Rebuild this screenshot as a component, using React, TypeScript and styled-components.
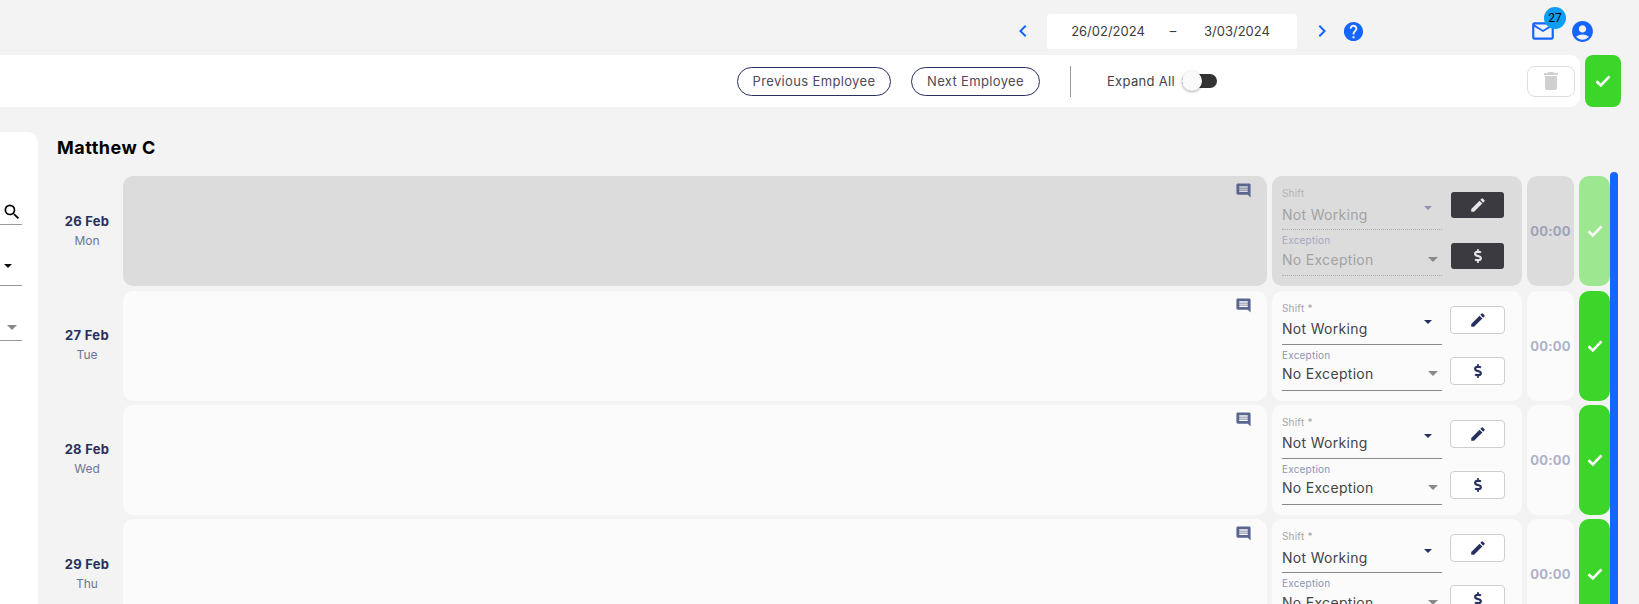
import React from 'react'
import styled, { createGlobalStyle } from 'styled-components'
import { FaDollarSign } from 'react-icons/fa'
import {
  MdAccountCircle,
  MdChevronLeft,
  MdChevronRight,
  MdComment,
  MdDelete,
  MdEdit,
  MdHelp,
  MdMailOutline,
  MdSearch,
} from 'react-icons/md'

const GlobalStyle = createGlobalStyle`
  html, body {
    margin: 0;
    padding: 0;
    background: #f3f3f3;
    font-family: Inter, "Open Sans", sans-serif;
  }
  * { box-sizing: border-box; }
`

const Page = styled.div`
  width: 1639px;
  height: 604px;
  overflow: hidden;
  display: flex;
  flex-direction: column;
  background: #f3f3f3;
`

const TopBar = styled.div`
  height: 55px;
  flex: none;
  display: flex;
  align-items: center;
  padding: 12px 0 5px 1011px;
`

const NavButton = styled.span`
  display: flex;
  width: 24px;
  color: #1565ff;
  font-size: 24px;
  margin: ${(p: { $margin: string }) => p.$margin};
`

const DateBox = styled.div`
  width: 250px;
  height: 35px;
  background: #fff;
  border-radius: 4px;
  display: grid;
  grid-template-columns: 122px 8px 1fr;
  align-items: center;
  font-size: 13px;
  color: #3c3c3c;
  text-align: center;
`

const IconSlot = styled.span`
  display: flex;
  color: #1565ff;
`

const Account = styled.div`
  position: relative;
  display: flex;
  align-items: center;
  margin-left: 165px;
  gap: 14px;
`

const Badge = styled.span`
  position: absolute;
  left: 14px;
  top: -11px;
  width: 22px;
  height: 22px;
  border-radius: 50%;
  background: #0d9df5;
  color: #000;
  font-family: Roboto, sans-serif;
  font-size: 12px;
  line-height: 22px;
  text-align: center;
`

const ToolbarRow = styled.div`
  height: 52px;
  flex: none;
  display: flex;
  gap: 5px;
`

const Toolbar = styled.div`
  width: 1580px;
  background: #fff;
  border-radius: 0 10px 10px 0;
  display: flex;
  align-items: center;
  padding: 0 5px 0 737px;
`

const OutlineButton = styled.button`
  width: ${(p: { $width: number }) => p.$width}px;
  height: 29px;
  margin-right: 20px;
  border: 1px solid #27305f;
  border-radius: 15px;
  background: #fff;
  color: #4b4b5c;
  font-family: inherit;
  font-size: 13px;
  letter-spacing: 0.35px;
  padding: 0;
`

const Divider = styled.div`
  width: 1px;
  height: 31px;
  margin: 0 36px 0 10px;
  background: #999;
`

const ExpandLabel = styled.span`
  width: 75px;
  font-size: 13px;
  letter-spacing: 0.3px;
  color: #444;
`

const Toggle = styled.div`
  position: relative;
  width: 35px;
  height: 14px;
  border-radius: 7px;
  background: #333;
`

const Knob = styled.span`
  position: absolute;
  left: 0;
  top: -3px;
  width: 20px;
  height: 20px;
  border-radius: 50%;
  background: #fafafa;
  box-shadow: 0 1px 3px rgba(0, 0, 0, 0.35);
`

const TrashButton = styled.div`
  margin-left: auto;
  width: 48px;
  height: 31px;
  border: 1px solid #dedede;
  border-radius: 8px;
  display: flex;
  align-items: center;
  justify-content: center;
  color: #d0d0d0;
  font-size: 24px;
`

const SaveButton = styled.div`
  width: 36px;
  border-radius: 8px;
  background: #3bd629;
  color: #fff;
  display: flex;
  align-items: center;
  justify-content: center;
`

const Body = styled.div`
  flex: 1;
  min-height: 0;
  display: flex;
`

const Sidebar = styled.aside`
  width: 38px;
  flex: none;
  margin-top: 25px;
  padding-top: 43px;
  background: #fff;
  border-radius: 0 10px 0 0;
`

const SidebarField = styled.div`
  width: 22px;
  height: ${(p: { $height: number }) => p.$height}px;
  border-bottom: 1px solid #999;
  display: flex;
  align-items: flex-end;
  justify-content: ${(p: { $height: number; $end?: boolean }) => (p.$end ? 'flex-end' : 'flex-start')};
  padding-bottom: 2px;
  color: #000;
  font-size: 20px;
`

const Caret = styled.span<{ $size: number; $color: string }>`
  flex: none;
  width: 0;
  height: 0;
  border-left: ${(p) => p.$size}px solid transparent;
  border-right: ${(p) => p.$size}px solid transparent;
  border-top: ${(p) => p.$size}px solid ${(p) => p.$color};
`

const SidebarCaret = styled(Caret)<{ $offset: number; $lift: number }>`
  margin-left: ${(p) => p.$offset}px;
  margin-bottom: ${(p) => p.$lift}px;
`

const Content = styled.main`
  flex: 1;
  min-width: 0;
`

const Title = styled.h2`
  margin: 0;
  height: 69.3px;
  padding: 30px 0 0 19px;
  font-size: 18px;
  line-height: 22px;
  font-weight: 700;
  letter-spacing: 0.5px;
  color: #000;
`

const ScrollArea = styled.div`
  display: flex;
  align-items: flex-start;
`

const Rows = styled.div`
  width: 1572px;
  display: grid;
  grid-auto-rows: 110px;
  row-gap: 4.3px;
`

const Scrollbar = styled.div`
  width: 8px;
  height: 440px;
  margin-top: -4px;
  background: #1565ff;
  border-radius: 4px 4px 0 0;
`

const Row = styled.div`
  display: grid;
  grid-template-columns: 80px 1144px 250px 47px 31px;
  column-gap: 5px;
`

const DateCell = styled.div`
  display: flex;
  flex-direction: column;
  align-items: center;
  justify-content: center;
  gap: 6px;
  padding-left: 18px;
  padding-bottom: 1px;
`

const DayNumber = styled.span`
  font-size: 13px;
  line-height: 14px;
  font-weight: 700;
  letter-spacing: 0.3px;
  color: #27305f;
`

const DayName = styled.span`
  font-size: 12px;
  line-height: 14px;
  color: #6d7598;
`

const Card = styled.div<{ $disabled: boolean }>`
  border-radius: 10px;
  background: ${(p) => (p.$disabled ? '#dcdcdc' : '#fbfbfb')};
`

const NoteCard = styled(Card)`
  display: flex;
  justify-content: flex-end;
  padding: 6px 15px 0 0;
  color: #5a6690;
  font-size: 17px;
`

const ShiftCard = styled(Card)`
  display: flex;
  gap: 8px;
  padding: 10px 0 0 10px;
`

const Fields = styled.div`
  width: 160px;
  display: flex;
  flex-direction: column;
  gap: 3px;
`

const Field = styled.div<{ $height: number; $disabled: boolean }>`
  height: ${(p) => p.$height}px;
  display: flex;
  flex-direction: column;
  border-bottom: 1px ${(p) => (p.$disabled ? 'dotted #aaa' : 'solid #8a8a8a')};
`

const FieldLabel = styled.span<{ $accent: boolean; $disabled: boolean }>`
  height: 14px;
  font-size: 10px;
  line-height: 14px;
  letter-spacing: 0.2px;
  color: ${(p) => (p.$accent ? '#8d94b5' : '#a5a5a5')};
  opacity: ${(p) => (p.$disabled ? 0.7 : 1)};
`

const FieldValue = styled.div<{ $disabled: boolean }>`
  flex: 1;
  display: flex;
  align-items: center;
  justify-content: space-between;
  padding-bottom: 4px;
  font-size: 14px;
  letter-spacing: 0.3px;
  color: ${(p) => (p.$disabled ? '#a2a2a2' : '#444')};
`

const ShiftValue = styled(FieldValue)`
  padding-bottom: 1px;
`

const ShiftCaret = styled(Caret)`
  margin: 0 10px 13px 0;
`

const ExceptionCaret = styled(Caret)`
  margin-right: 4px;
`

const Actions = styled.div`
  display: flex;
  flex-direction: column;
  gap: 23px;
  padding-top: 5px;
`

const ActionButton = styled.div<{ $disabled: boolean }>`
  width: 55px;
  height: 28px;
  border-radius: 4px;
  border: 1px solid ${(p) => (p.$disabled ? 'transparent' : '#cfcfcf')};
  background: ${(p) => (p.$disabled ? '#3a3a40' : '#fff')};
  background-clip: padding-box;
  color: ${(p) => (p.$disabled ? '#e6e6e6' : '#27305f')};
  display: flex;
  align-items: center;
  justify-content: center;
  font-size: 18px;
`

const MoneyIcon = styled(FaDollarSign)`
  width: 14px;
  height: 14px;
`

const TimeCard = styled(Card)`
  display: flex;
  align-items: center;
  justify-content: center;
  font-size: 13px;
  font-weight: 700;
  letter-spacing: 0.2px;
  color: ${(p) => (p.$disabled ? '#9ea2b8' : '#adb1c9')};
`

const CheckCard = styled.div<{ $disabled: boolean }>`
  border-radius: 10px;
  background: ${(p) => (p.$disabled ? '#9ce78f' : '#3bd629')};
  color: #fff;
  display: flex;
  align-items: center;
  justify-content: center;
`

const CheckMark = () => (
  <svg width="16" height="14" viewBox="0 0 16 14" fill="none">
    <path d="M1.5 7.2 L5.8 11.4 L14.5 2.4" stroke="currentColor" strokeWidth="2.6" />
  </svg>
)

const days = [
  { date: '26 Feb', day: 'Mon', disabled: true },
  { date: '27 Feb', day: 'Tue', disabled: false },
  { date: '28 Feb', day: 'Wed', disabled: false },
  { date: '29 Feb', day: 'Thu', disabled: false },
]

export default function App() {
  return (
    <Page>
      <GlobalStyle />
      <TopBar>
        <NavButton $margin="0 12px 0 0">
          <MdChevronLeft />
        </NavButton>
        <DateBox>
          <span>26/02/2024</span>
          <span>–</span>
          <span>3/03/2024</span>
        </DateBox>
        <NavButton $margin="0 8px 0 13px">
          <MdChevronRight />
        </NavButton>
        <IconSlot>
          <MdHelp size={23} />
        </IconSlot>
        <Account>
          <IconSlot>
            <MdMailOutline size={26} />
          </IconSlot>
          <Badge>27</Badge>
          <IconSlot>
            <MdAccountCircle size={25} />
          </IconSlot>
        </Account>
      </TopBar>
      <ToolbarRow>
        <Toolbar>
          <OutlineButton $width={154}>Previous Employee</OutlineButton>
          <OutlineButton $width={129}>Next Employee</OutlineButton>
          <Divider />
          <ExpandLabel>Expand All</ExpandLabel>
          <Toggle>
            <Knob />
          </Toggle>
          <TrashButton>
            <MdDelete />
          </TrashButton>
        </Toolbar>
        <SaveButton>
          <CheckMark />
        </SaveButton>
      </ToolbarRow>
      <Body>
        <Sidebar>
          <SidebarField $height={50} $end>
            <MdSearch />
          </SidebarField>
          <SidebarField $height={61}>
            <SidebarCaret $size={4} $color="#111" $offset={4} $lift={15} />
          </SidebarField>
          <SidebarField $height={55}>
            <SidebarCaret $size={5} $color="#888" $offset={7} $lift={8} />
          </SidebarField>
        </Sidebar>
        <Content>
          <Title>Matthew C</Title>
          <ScrollArea>
            <Rows>
              {days.map((d) => (
                <Row key={d.date}>
                  <DateCell>
                    <DayNumber>{d.date}</DayNumber>
                    <DayName>{d.day}</DayName>
                  </DateCell>
                  <NoteCard $disabled={d.disabled}>
                    <MdComment />
                  </NoteCard>
                  <ShiftCard $disabled={d.disabled}>
                    <Fields>
                      <Field $height={44} $disabled={d.disabled}>
                        <FieldLabel $accent={false} $disabled={d.disabled}>
                          {d.disabled ? 'Shift' : 'Shift *'}
                        </FieldLabel>
                        <ShiftValue $disabled={d.disabled}>
                          Not Working
                          <ShiftCaret $size={4} $color={d.disabled ? '#8d94b5' : '#27305f'} />
                        </ShiftValue>
                      </Field>
                      <Field $height={43} $disabled={d.disabled}>
                        <FieldLabel $accent $disabled={d.disabled}>
                          Exception
                        </FieldLabel>
                        <FieldValue $disabled={d.disabled}>
                          No Exception
                          <ExceptionCaret $size={5} $color="#8a8a8a" />
                        </FieldValue>
                      </Field>
                    </Fields>
                    <Actions>
                      <ActionButton $disabled={d.disabled}>
                        <MdEdit />
                      </ActionButton>
                      <ActionButton $disabled={d.disabled}>
                        <MoneyIcon />
                      </ActionButton>
                    </Actions>
                  </ShiftCard>
                  <TimeCard $disabled={d.disabled}>00:00</TimeCard>
                  <CheckCard $disabled={d.disabled}>
                    <CheckMark />
                  </CheckCard>
                </Row>
              ))}
            </Rows>
            <Scrollbar />
          </ScrollArea>
        </Content>
      </Body>
    </Page>
  )
}
